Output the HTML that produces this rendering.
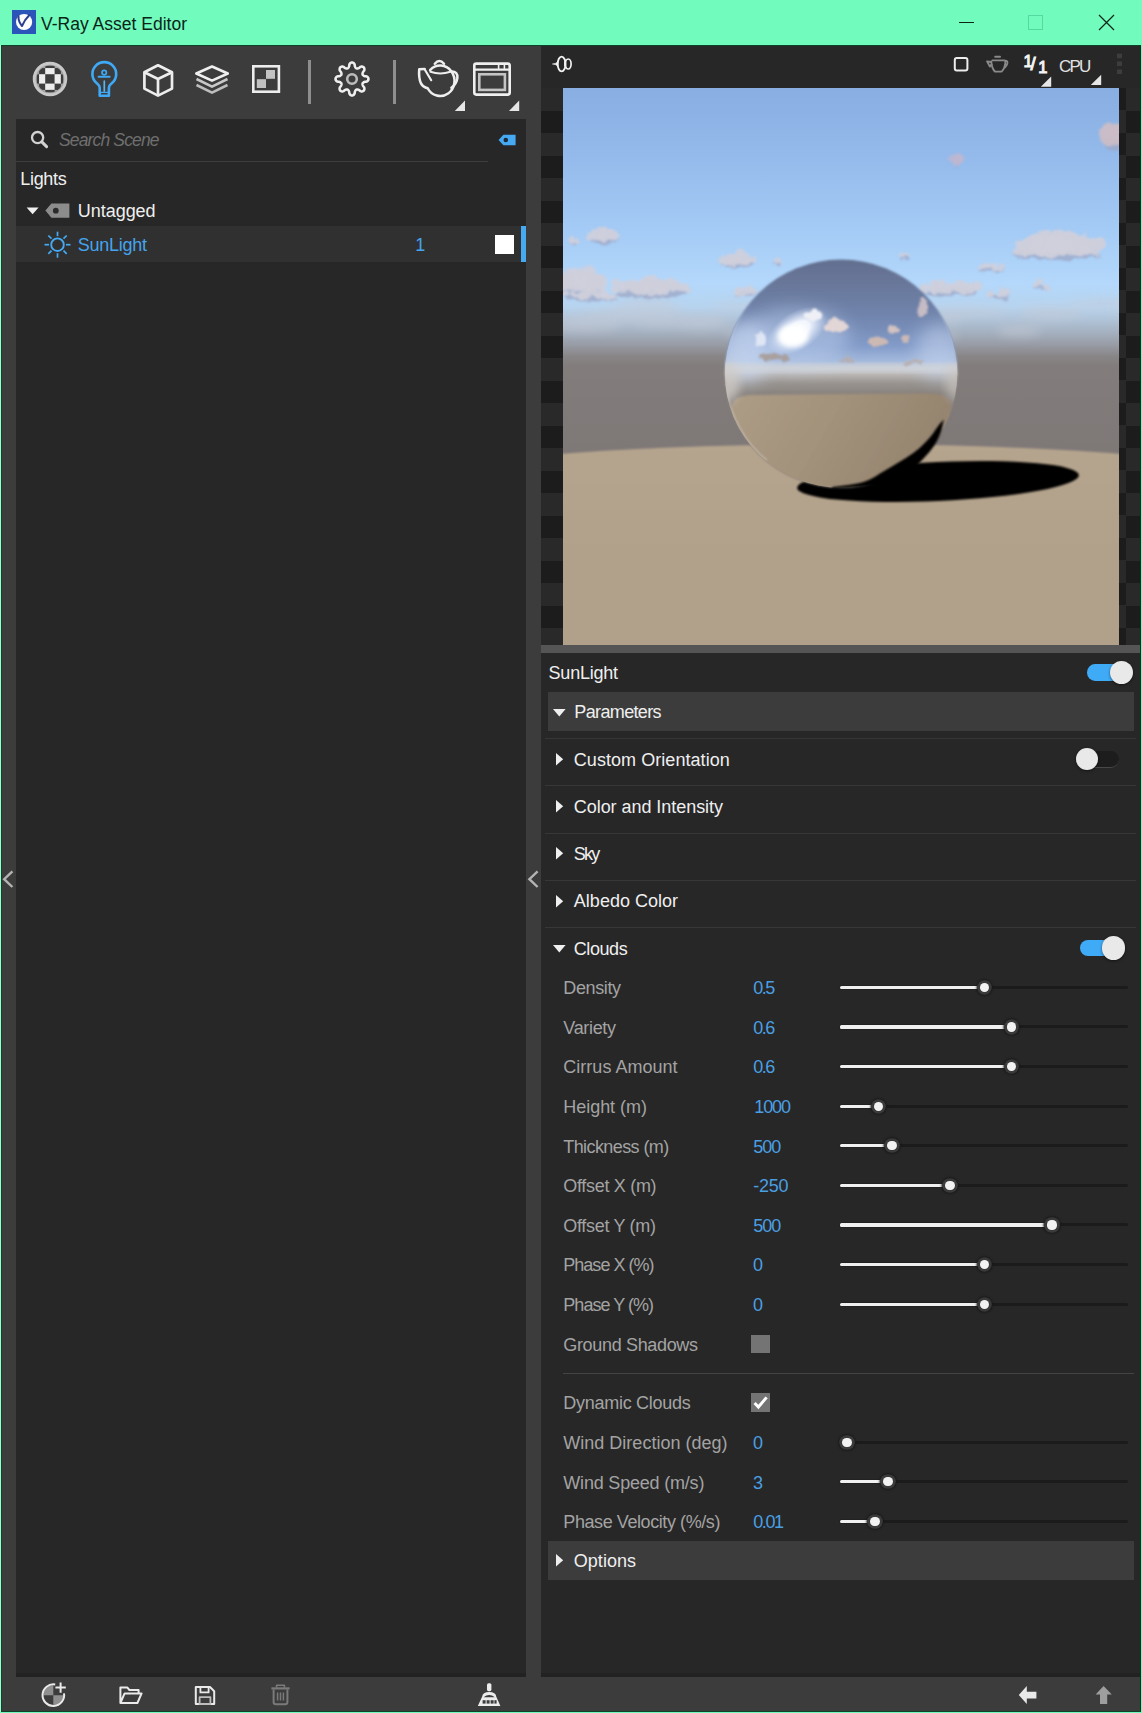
<!DOCTYPE html>
<html><head><meta charset="utf-8"><title>V-Ray Asset Editor</title>
<style>
*{box-sizing:border-box;margin:0;padding:0}
html,body{width:1142px;height:1713px;overflow:hidden;background:#3c3c3c}
body{font-family:"Liberation Sans",sans-serif;font-size:18px;color:#f0f0f0;position:relative}
.abs{position:absolute}
.t{position:absolute;white-space:nowrap}
svg{position:absolute;overflow:visible}
#title{left:0;top:0;width:1142px;height:45px;background:#71fcbd}
#left{left:16px;top:119px;width:510px;height:1558px;background:#272727;border-bottom:4px solid #222}
#right{left:541px;top:46px;width:599px;height:1631px;background:#272727;border-bottom:4px solid #222}
#checker{left:541px;top:88px;width:599px;height:557px;background:repeating-conic-gradient(#1c1c1c 0% 25%,#292929 0% 50%);background-size:45px 45px}
.sep{position:absolute;height:1px;background:#373737;left:544.5px;width:591.5px}
.track{position:absolute;left:840px;width:288px;height:3px;background:#1b1b1b;border-radius:1.5px}
.fill{position:absolute;left:840px;height:3.4px;background:#f0f0f0;border-radius:1.5px;box-shadow:0 0 0 0.6px #1c1c1c}
.knob{position:absolute;width:9.2px;height:9.2px;border-radius:50%;background:#f2f2f2;box-shadow:0 0 0 2.8px #3a3a3a,0 0 2px 3.6px #171717}
.hdr{position:absolute;left:548px;width:586px;height:39px;background:#3c3c3c}
</style></head>
<body>
<div id="title" class="abs"></div>
<svg style="left:12px;top:10px" width="24" height="24" viewBox="0 0 24 24"><rect width="24" height="24" fill="#2b55b8"/><circle cx="12.1" cy="12" r="8.1" fill="#fdfdfd"/><path d="M6.5 6.4 Q6.2 11.4 10 16 Q12.6 9.6 17.4 5" fill="none" stroke="#2b3f92" stroke-width="2" stroke-linecap="round" stroke-linejoin="round"/></svg>
<div class="t" style="left:41.00px;top:10px;font-size:17.5px;line-height:28px;color:#0b2418;letter-spacing:0.006px;">V-Ray Asset Editor</div>
<svg style="left:940px;top:0" width="202" height="45" viewBox="940 0 202 45" shape-rendering="crispEdges"><rect x="959" y="22" width="15" height="1" fill="#0b2418"/><rect x="1028.5" y="15.5" width="14" height="14" fill="none" stroke="#55d9a0" stroke-width="1"/><g shape-rendering="geometricPrecision"><path d="M1099 15 L1114 30 M1114 15 L1099 30" stroke="#0b2418" stroke-width="1.2" fill="none"/></g></svg>
<div id="left" class="abs"></div>
<div id="right" class="abs"></div>
<div id="checker" class="abs"></div>
<svg style="left:30px;top:59px" width="40" height="40" viewBox="30 59 40 40"><defs><clipPath id="cs"><circle cx="50" cy="79" r="13.4"/></clipPath></defs><circle cx="50" cy="79" r="15.8" fill="#a4a4a4" stroke="#c9c9c9" stroke-width="2.9"/><g clip-path="url(#cs)"><rect x="36.40" y="74.30" width="2.70" height="9.40" fill="#3d3d3d"/><rect x="39.10" y="68.10" width="6.20" height="6.20" fill="#3d3d3d"/><rect x="39.10" y="74.30" width="6.20" height="9.40" fill="#ececec"/><rect x="39.10" y="83.70" width="6.20" height="6.20" fill="#3d3d3d"/><rect x="45.30" y="65.40" width="9.40" height="2.70" fill="#3d3d3d"/><rect x="45.30" y="68.10" width="9.40" height="6.20" fill="#ececec"/><rect x="45.30" y="74.30" width="9.40" height="9.40" fill="#3d3d3d"/><rect x="45.30" y="83.70" width="9.40" height="6.20" fill="#ececec"/><rect x="45.30" y="89.90" width="9.40" height="2.70" fill="#3d3d3d"/><rect x="54.70" y="68.10" width="6.20" height="6.20" fill="#3d3d3d"/><rect x="54.70" y="74.30" width="6.20" height="9.40" fill="#ececec"/><rect x="54.70" y="83.70" width="6.20" height="6.20" fill="#3d3d3d"/><rect x="60.90" y="74.30" width="2.70" height="9.40" fill="#3d3d3d"/></g></svg>
<svg style="left:88px;top:58px" width="34" height="42" viewBox="88 58 34 42" fill="none" stroke="#3fa9f5" stroke-width="2.6" stroke-linecap="round" stroke-linejoin="round"><path d="M99.7 95.8 L99.7 87.8 Q99.7 85.4 97.4 83.7 L96.6 83.1 A11.9 11.9 0 1 1 112 83.1 L111.2 83.7 Q108.9 85.4 108.9 87.8 L108.9 95.8 Z"/><path d="M100.4 92.4 L108.2 92.4" stroke-width="1.4"/><path d="M104.3 81 L104.3 91" stroke-width="1.7" stroke="#5ab4f2"/><circle cx="104.2" cy="72.6" r="2.2" stroke-width="1.7"/><path d="M98.6 76.7 L109.6 76.7" stroke-width="2"/></svg>
<svg style="left:140px;top:60px" width="36" height="40" viewBox="140 60 36 40" fill="none" stroke="#ededed" stroke-width="2.7" stroke-linejoin="round"><path d="M158 65.3 L172 72.3 L172 88.6 L158 95.6 L144.4 88.6 L144.4 72.3 Z"/><path d="M144.4 72.3 L158 79 L172 72.3 M158 79 L158 95.6"/></svg>
<svg style="left:192px;top:60px" width="40" height="40" viewBox="192 60 40 40" fill="none" stroke-width="2.6" stroke-linejoin="round"><path d="M196.5 85 L212 92.6 L227.5 85" stroke="#bdbdbd"/><path d="M196.5 79 L212 86.6 L227.5 79" stroke="#c8c8c8"/><path d="M212 66.5 L227.8 73.5 L212 80.6 L196.3 73.5 Z" stroke="#efefef"/></svg>
<svg style="left:250px;top:62px" width="32" height="34" viewBox="250 62 32 34"><rect x="253.3" y="66.3" width="25.6" height="25.4" fill="none" stroke="#ededed" stroke-width="2.6"/><rect x="266" y="70" width="9" height="8.8" fill="#c2c2c2"/><rect x="256.8" y="79.2" width="9.2" height="8.8" fill="#c2c2c2"/></svg>
<div class="abs" style="left:308px;top:60px;width:3px;height:44px;background:#8e8e8e"></div>
<div class="abs" style="left:393px;top:60px;width:3px;height:44px;background:#8e8e8e"></div>
<svg style="left:332px;top:59px" width="40" height="40" viewBox="332 59 40 40" fill="none"><path d="M352.00 62.50 L352.43 62.54 L352.86 62.65 L353.27 62.85 L353.67 63.12 L354.04 63.48 L354.38 63.95 L354.67 64.60 L354.78 65.94 L354.98 66.59 L355.20 67.07 L355.42 67.46 L355.65 67.78 L355.88 68.04 L356.13 68.23 L356.40 68.38 L356.69 68.46 L357.01 68.50 L357.36 68.49 L357.74 68.42 L358.18 68.30 L358.67 68.12 L359.27 67.80 L360.29 66.93 L360.96 66.67 L361.53 66.58 L362.05 66.59 L362.52 66.68 L362.95 66.84 L363.34 67.06 L363.67 67.33 L363.94 67.66 L364.16 68.05 L364.32 68.48 L364.41 68.95 L364.42 69.47 L364.33 70.04 L364.07 70.71 L363.20 71.73 L362.88 72.33 L362.70 72.82 L362.58 73.26 L362.51 73.64 L362.50 73.99 L362.54 74.31 L362.62 74.60 L362.77 74.87 L362.96 75.12 L363.22 75.35 L363.54 75.58 L363.93 75.80 L364.41 76.02 L365.06 76.22 L366.40 76.33 L367.05 76.62 L367.52 76.96 L367.88 77.33 L368.15 77.73 L368.35 78.14 L368.46 78.57 L368.50 79.00 L368.46 79.43 L368.35 79.86 L368.15 80.27 L367.88 80.67 L367.52 81.04 L367.05 81.38 L366.40 81.67 L365.06 81.78 L364.41 81.98 L363.93 82.20 L363.54 82.42 L363.22 82.65 L362.96 82.88 L362.77 83.13 L362.62 83.40 L362.54 83.69 L362.50 84.01 L362.51 84.36 L362.58 84.74 L362.70 85.18 L362.88 85.67 L363.20 86.27 L364.07 87.29 L364.33 87.96 L364.42 88.53 L364.41 89.05 L364.32 89.52 L364.16 89.95 L363.94 90.34 L363.67 90.67 L363.34 90.94 L362.95 91.16 L362.52 91.32 L362.05 91.41 L361.53 91.42 L360.96 91.33 L360.29 91.07 L359.27 90.20 L358.67 89.88 L358.18 89.70 L357.74 89.58 L357.36 89.51 L357.01 89.50 L356.69 89.54 L356.40 89.62 L356.13 89.77 L355.88 89.96 L355.65 90.22 L355.42 90.54 L355.20 90.93 L354.98 91.41 L354.78 92.06 L354.67 93.40 L354.38 94.05 L354.04 94.52 L353.67 94.88 L353.27 95.15 L352.86 95.35 L352.43 95.46 L352.00 95.50 L351.57 95.46 L351.14 95.35 L350.73 95.15 L350.33 94.88 L349.96 94.52 L349.62 94.05 L349.33 93.40 L349.22 92.06 L349.02 91.41 L348.80 90.93 L348.58 90.54 L348.35 90.22 L348.12 89.96 L347.87 89.77 L347.60 89.62 L347.31 89.54 L346.99 89.50 L346.64 89.51 L346.26 89.58 L345.82 89.70 L345.33 89.88 L344.73 90.20 L343.71 91.07 L343.04 91.33 L342.47 91.42 L341.95 91.41 L341.48 91.32 L341.05 91.16 L340.66 90.94 L340.33 90.67 L340.06 90.34 L339.84 89.95 L339.68 89.52 L339.59 89.05 L339.58 88.53 L339.67 87.96 L339.93 87.29 L340.80 86.27 L341.12 85.67 L341.30 85.18 L341.42 84.74 L341.49 84.36 L341.50 84.01 L341.46 83.69 L341.38 83.40 L341.23 83.13 L341.04 82.88 L340.78 82.65 L340.46 82.42 L340.07 82.20 L339.59 81.98 L338.94 81.78 L337.60 81.67 L336.95 81.38 L336.48 81.04 L336.12 80.67 L335.85 80.27 L335.65 79.86 L335.54 79.43 L335.50 79.00 L335.54 78.57 L335.65 78.14 L335.85 77.73 L336.12 77.33 L336.48 76.96 L336.95 76.62 L337.60 76.33 L338.94 76.22 L339.59 76.02 L340.07 75.80 L340.46 75.58 L340.78 75.35 L341.04 75.12 L341.23 74.87 L341.38 74.60 L341.46 74.31 L341.50 73.99 L341.49 73.64 L341.42 73.26 L341.30 72.82 L341.12 72.33 L340.80 71.73 L339.93 70.71 L339.67 70.04 L339.58 69.47 L339.59 68.95 L339.68 68.48 L339.84 68.05 L340.06 67.66 L340.33 67.33 L340.66 67.06 L341.05 66.84 L341.48 66.68 L341.95 66.59 L342.47 66.58 L343.04 66.67 L343.71 66.93 L344.73 67.80 L345.33 68.12 L345.82 68.30 L346.26 68.42 L346.64 68.49 L346.99 68.50 L347.31 68.46 L347.60 68.38 L347.87 68.23 L348.12 68.04 L348.35 67.78 L348.58 67.46 L348.80 67.07 L349.02 66.59 L349.22 65.94 L349.33 64.60 L349.62 63.95 L349.96 63.48 L350.33 63.12 L350.73 62.85 L351.14 62.65 L351.57 62.54 Z" stroke="#efefef" stroke-width="2.5" stroke-linejoin="round"/><circle cx="352" cy="79" r="4.8" stroke="#bcbcbc" stroke-width="2.6"/></svg>
<svg style="left:416px;top:58px" width="46" height="42" viewBox="416 58 46 42" fill="none" stroke="#efefef" stroke-width="2.5" stroke-linecap="round" stroke-linejoin="round"><path d="M427.57 87.94 A14.3 15.2 0 1 0 430.09 70.05"/><path d="M430.4 71.8 Q440.2 75 450.4 71.8" stroke-width="2"/><path d="M434.8 63.8 Q439.4 58.4 444 63.8"/><path d="M424.6 68.9 L419.2 69.3 Q418.6 78 420.8 83 Q422.4 86.6 426.6 88"/><path d="M424.6 69.3 L431.2 80.2" stroke-width="2.2"/><path d="M451.8 71.6 Q457.8 71.6 457.4 77.8 Q456.8 83.6 451.4 87.8"/></svg>
<svg style="left:470px;top:60px" width="44" height="40" viewBox="470 60 44 40" fill="none"><rect x="474.3" y="63.6" width="35.4" height="31" rx="2" stroke="#efefef" stroke-width="2.6"/><path d="M474.3 69.6 L509.7 69.6" stroke="#efefef" stroke-width="2.2"/><path d="M498.6 65 L498.6 69 M504.4 65 L504.4 69" stroke="#efefef" stroke-width="1.6"/><rect x="479.3" y="74.3" width="25.6" height="15.6" stroke="#c4c4c4" stroke-width="2.6"/></svg>
<svg style="left:0;top:0" width="1142" height="120" viewBox="0 0 1142 120"><path d="M465 100.6 L465 111 L454.8 111 Z M519.2 100.6 L519.2 111 L509 111 Z" fill="#e6e6e6"/><path d="M1051.2 76.6 L1051.2 86.8 L1040.8 86.8 Z M1101.2 74.8 L1101.2 85 L1090.8 85 Z" fill="#e6e6e6"/></svg>
<svg style="left:28px;top:128px" width="24" height="24" viewBox="28 128 24 24" fill="none" stroke="#d2d2d2" stroke-linecap="round"><circle cx="37.6" cy="137.6" r="5.6" stroke-width="2.3"/><path d="M41.8 141.9 L46.6 146.6" stroke-width="3"/></svg>
<div class="t" style="left:59.00px;top:126px;font-size:17.5px;line-height:28px;color:#6f6f6f;letter-spacing:-0.848px;font-style:italic;">Search Scene</div>
<div class="abs" style="left:16px;top:161px;width:472px;height:1px;background:#3e3e3e"></div>
<svg style="left:496px;top:132px" width="22" height="16" viewBox="496 132 22 16"><path d="M498.6 140 L503.4 134.8 L515.6 134.8 L515.6 145.2 L503.4 145.2 Z" fill="#45aaf2"/><circle cx="505.8" cy="140" r="2.3" fill="#1d2a36"/></svg>
<div class="t" style="left:20.20px;top:165px;font-size:18px;line-height:28px;color:#efefef;letter-spacing:-0.286px;">Lights</div>
<svg style="left:24px;top:200px" width="50" height="22" viewBox="24 200 50 22"><path d="M26.6 207.4 L38.6 207.4 L32.6 214.2 Z" fill="#efefef"/><path d="M45.4 210.6 L51.4 203.6 L69.4 203.6 L69.4 217.8 L51.4 217.8 Z" fill="#8c8c8c"/><circle cx="55.8" cy="210.7" r="2.9" fill="#2b2b2b"/></svg>
<div class="t" style="left:77.80px;top:197px;font-size:18px;line-height:28px;color:#efefef;letter-spacing:-0.037px;">Untagged</div>
<div class="abs" style="left:16px;top:226px;width:505px;height:36px;background:#303030"></div>
<div class="abs" style="left:521px;top:226px;width:5px;height:36px;background:#45aaf2"></div>
<div class="abs" style="left:495px;top:235px;width:19px;height:18.5px;background:#fff"></div>
<svg style="left:43px;top:230px" width="30" height="30" viewBox="43 230 30 30" fill="none" stroke="#45aaf2" stroke-linecap="butt"><circle cx="57.5" cy="244.7" r="6.3" stroke-width="1.9"/><path d="M66.00 244.70 L70.50 244.70" stroke-width="1.7"/><path d="M63.51 250.71 L66.69 253.89" stroke-width="1.7"/><path d="M57.50 253.20 L57.50 257.70" stroke-width="1.7"/><path d="M51.49 250.71 L48.31 253.89" stroke-width="1.7"/><path d="M49.00 244.70 L44.50 244.70" stroke-width="1.7"/><path d="M51.49 238.69 L48.31 235.51" stroke-width="1.7"/><path d="M57.50 236.20 L57.50 231.70" stroke-width="1.7"/><path d="M63.51 238.69 L66.69 235.51" stroke-width="1.7"/></svg>
<div class="t" style="left:77.80px;top:231px;font-size:18px;line-height:28px;color:#45a4ec;letter-spacing:-0.266px;">SunLight</div>
<div class="t" style="left:415.20px;top:231px;font-size:18px;line-height:28px;color:#45a4ec;">1</div>
<svg style="left:0;top:865px" width="545" height="30" viewBox="0 865 545 30" fill="none" stroke="#b4b4b4" stroke-width="2.4"><path d="M12.4 871.4 L4.2 879.2 L12.4 887"/><path d="M537.6 871.4 L529.4 879.2 L537.6 887"/></svg>
<svg style="left:548px;top:52px" width="30" height="24" viewBox="548 52 30 24" fill="none" stroke="#f2f2f2"><ellipse cx="561.6" cy="64" rx="3.9" ry="7.4" stroke-width="1.8"/><ellipse cx="568.2" cy="64" rx="2.9" ry="5" stroke-width="1.7"/><path d="M566 59.5 Q563.2 64 566 68.5" stroke-width="1.2"/><path d="M552.4 64 Q556.5 64 558 61 L558 67 Q556.5 64 552.4 64Z" fill="#f2f2f2" stroke-width="0.6"/></svg>
<svg style="left:950px;top:52px" width="22" height="24" viewBox="950 52 22 24" fill="none"><rect x="954.8" y="58" width="12.6" height="12.4" rx="2" stroke="#ececec" stroke-width="2"/></svg>
<svg style="left:984px;top:52px" width="26" height="24" viewBox="984 52 26 24" fill="none" stroke="#8a8a8a" stroke-width="1.8" stroke-linecap="round" stroke-linejoin="round"><path d="M995.2 56.8 L1000 56.8" stroke-width="2"/><path d="M992.4 60.3 L1004.2 60.3"/><path d="M991.3 61.4 Q991.6 68.6 995.2 71.7 L1001.6 71.7 Q1005 68.6 1005.5 61.4"/><path d="M991.6 64.4 L989.9 66.6 L987 61.3 L991 62"/><path d="M1004.8 60.7 Q1008.2 60.5 1007.3 63.8 Q1006.6 66.2 1004.9 67.4"/></svg>
<div class="t" style="left:1023.60px;top:48px;font-size:16.5px;line-height:26px;color:#f4f4f4;-webkit-text-stroke:1px #f4f4f4;">1</div>
<div class="t" style="left:1030.60px;top:49px;font-size:18.5px;line-height:29px;color:#f4f4f4;-webkit-text-stroke:1px #f4f4f4;">/</div>
<div class="t" style="left:1038.30px;top:54px;font-size:16.5px;line-height:26px;color:#f4f4f4;-webkit-text-stroke:1px #f4f4f4;">1</div>
<div class="t" style="left:1059.00px;top:53px;font-size:17px;line-height:27px;color:#e2e2e2;letter-spacing:-1.795px;">CPU</div>
<svg style="left:1114px;top:50px" width="12" height="30" viewBox="1114 50 12 30"><rect x="1117" y="53.6" width="5" height="4.6" fill="#3d3d3d"/><rect x="1117" y="61.4" width="5" height="4.6" fill="#3d3d3d"/><rect x="1117" y="69.4" width="5" height="4.6" fill="#3d3d3d"/></svg>
<svg style="left:563px;top:88px" width="556" height="557" viewBox="563 88 556 557">
<defs>
<linearGradient id="sky" x1="0" y1="88" x2="0" y2="645" gradientUnits="userSpaceOnUse">
<stop offset="0" stop-color="#88aee2"/>
<stop offset="0.13" stop-color="#95bbec"/>
<stop offset="0.262" stop-color="#a5ccf6"/>
<stop offset="0.35" stop-color="#b4d8fb"/>
<stop offset="0.393" stop-color="#b7d4ef"/>
<stop offset="0.415" stop-color="#b0c4d9"/>
<stop offset="0.436" stop-color="#a6b3c3"/>
<stop offset="0.459" stop-color="#999ea8"/>
<stop offset="0.481" stop-color="#898688"/>
<stop offset="0.499" stop-color="#827d7c"/>
<stop offset="0.65" stop-color="#7e7877"/>
</linearGradient>
<linearGradient id="gnd" x1="0" y1="445" x2="0" y2="645" gradientUnits="userSpaceOnUse">
<stop offset="0" stop-color="#b6a58e"/><stop offset="0.6" stop-color="#b1a18a"/><stop offset="1" stop-color="#b1a18a"/>
</linearGradient>
<linearGradient id="sph" x1="0" y1="258" x2="0" y2="489" gradientUnits="userSpaceOnUse">
<stop offset="0" stop-color="#626e8e"/>
<stop offset="0.1" stop-color="#687698"/>
<stop offset="0.25" stop-color="#7185ad"/>
<stop offset="0.38" stop-color="#829bc8"/>
<stop offset="0.445" stop-color="#a3b9dd"/>
<stop offset="0.478" stop-color="#c2c8d2"/>
<stop offset="0.5" stop-color="#bdbab9"/>
<stop offset="0.54" stop-color="#9a9591"/>
<stop offset="0.585" stop-color="#8a847f"/>
<stop offset="1" stop-color="#8a847f"/>
</linearGradient>
<linearGradient id="sgnd" x1="733" y1="392" x2="900" y2="489" gradientUnits="userSpaceOnUse">
<stop offset="0" stop-color="#ad9c86"/><stop offset="0.5" stop-color="#a3927b"/><stop offset="1" stop-color="#96856f"/>
</linearGradient>
<radialGradient id="edge" cx="841.1" cy="373.7" r="115.2" gradientUnits="userSpaceOnUse">
<stop offset="0" stop-color="#000" stop-opacity="0"/><stop offset="0.8" stop-color="#000" stop-opacity="0"/><stop offset="1" stop-color="#1a2038" stop-opacity=".22"/>
</radialGradient>
<radialGradient id="glint" cx="0.5" cy="0.5" r="0.5"><stop offset="0" stop-color="#fff"/><stop offset="0.4" stop-color="#f6f9ff" stop-opacity=".96"/><stop offset="1" stop-color="#dfeaff" stop-opacity="0"/></radialGradient>
<filter id="b1" x="-20%" y="-20%" width="140%" height="140%"><feGaussianBlur stdDeviation="1.3"/></filter>
<filter id="b2" x="-20%" y="-20%" width="140%" height="140%"><feGaussianBlur stdDeviation="2.6"/></filter>
<filter id="b5" x="-20%" y="-40%" width="140%" height="180%"><feGaussianBlur stdDeviation="5"/></filter>
<filter id="b9" x="-30%" y="-40%" width="160%" height="180%"><feGaussianBlur stdDeviation="9"/></filter>
<filter id="b08" x="-10%" y="-10%" width="120%" height="120%"><feGaussianBlur stdDeviation="0.8"/></filter>
<filter id="cl" x="-10%" y="-10%" width="120%" height="120%"><feTurbulence type="fractalNoise" baseFrequency="0.09" numOctaves="3" seed="4" result="n"/><feDisplacementMap in="SourceGraphic" in2="n" scale="9" xChannelSelector="R" yChannelSelector="G"/><feGaussianBlur stdDeviation="1.1"/></filter>
<clipPath id="imgc"><rect x="563" y="88" width="556" height="557"/></clipPath>
<clipPath id="sc"><ellipse cx="841.1" cy="373.7" rx="116.2" ry="114.0"/></clipPath>
</defs>
<g clip-path="url(#imgc)">
<rect x="563" y="88" width="556" height="557" fill="url(#sky)"/>
<g filter="url(#b5)" opacity=".5">
<ellipse cx="743" cy="307" rx="31" ry="4" fill="#c6cad6"/>
<ellipse cx="861" cy="314" rx="16" ry="7" fill="#c6cad6"/>
<ellipse cx="584" cy="317" rx="17" ry="4" fill="#c6cad6"/>
<ellipse cx="799" cy="330" rx="18" ry="5" fill="#c6cad6"/>
<ellipse cx="912" cy="334" rx="29" ry="6" fill="#c6cad6"/>
<ellipse cx="1106" cy="304" rx="36" ry="5" fill="#c6cad6"/>
<ellipse cx="643" cy="306" rx="23" ry="8" fill="#c6cad6"/>
<ellipse cx="663" cy="322" rx="31" ry="6" fill="#c6cad6"/>
<ellipse cx="868" cy="304" rx="16" ry="5" fill="#c6cad6"/>
<ellipse cx="941" cy="317" rx="23" ry="7" fill="#c6cad6"/>
<ellipse cx="815" cy="312" rx="35" ry="7" fill="#c6cad6"/>
<ellipse cx="699" cy="322" rx="28" ry="8" fill="#c6cad6"/>
<ellipse cx="969" cy="312" rx="40" ry="5" fill="#c6cad6"/>
<ellipse cx="795" cy="328" rx="19" ry="6" fill="#c6cad6"/>
<ellipse cx="585" cy="325" rx="34" ry="7" fill="#c6cad6"/>
<ellipse cx="1050" cy="313" rx="32" ry="7" fill="#c6cad6"/>
<ellipse cx="885" cy="318" rx="36" ry="9" fill="#c6cad6"/>
<ellipse cx="827" cy="325" rx="17" ry="8" fill="#c6cad6"/>
<ellipse cx="923" cy="336" rx="36" ry="5" fill="#c6cad6"/>
<ellipse cx="778" cy="325" rx="16" ry="6" fill="#c6cad6"/>
<ellipse cx="656" cy="306" rx="16" ry="8" fill="#c6cad6"/>
<ellipse cx="635" cy="310" rx="25" ry="8" fill="#c6cad6"/>
<ellipse cx="608" cy="317" rx="29" ry="8" fill="#c6cad6"/>
<ellipse cx="1019" cy="331" rx="22" ry="6" fill="#c6cad6"/>
<ellipse cx="762" cy="332" rx="39" ry="5" fill="#c6cad6"/>
<ellipse cx="661" cy="310" rx="21" ry="6" fill="#c6cad6"/>
</g>
<g filter="url(#cl)">
<ellipse cx="604.0" cy="240.1" rx="13.4" ry="3.9" fill="#9da6c4" opacity="0.77"/><circle cx="592.5" cy="234.9" r="4.8" fill="#cfcfdc" opacity="0.9"/><circle cx="600.9" cy="233.4" r="6.6" fill="#cfcfdc" opacity="0.9"/><circle cx="605.6" cy="233.8" r="7.1" fill="#cfcfdc" opacity="0.9"/><circle cx="613.4" cy="234.9" r="5.6" fill="#cfcfdc" opacity="0.9"/>
<ellipse cx="574.0" cy="242.3" rx="3.8" ry="2.4" fill="#9da6c4" opacity="0.77"/><circle cx="570.3" cy="239.1" r="2.7" fill="#cfcfdc" opacity="0.9"/><circle cx="572.6" cy="238.9" r="3.4" fill="#cfcfdc" opacity="0.9"/><circle cx="578.3" cy="240.0" r="3.5" fill="#cfcfdc" opacity="0.9"/>
<ellipse cx="738.0" cy="264.1" rx="17.3" ry="3.9" fill="#9da6c4" opacity="0.77"/><circle cx="723.5" cy="260.2" r="4.7" fill="#cfcfdc" opacity="0.9"/><circle cx="730.8" cy="260.1" r="6.2" fill="#cfcfdc" opacity="0.9"/><circle cx="733.1" cy="260.1" r="6.4" fill="#cfcfdc" opacity="0.9"/><circle cx="741.6" cy="257.3" r="7.4" fill="#cfcfdc" opacity="0.9"/><circle cx="746.9" cy="259.3" r="5.2" fill="#cfcfdc" opacity="0.9"/><circle cx="753.3" cy="258.8" r="3.6" fill="#cfcfdc" opacity="0.9"/>
<ellipse cx="777.0" cy="264.0" rx="3.4" ry="1.8" fill="#9da6c4" opacity="0.77"/><circle cx="775.8" cy="261.6" r="2.6" fill="#cfcfdc" opacity="0.9"/><circle cx="776.0" cy="262.1" r="2.5" fill="#cfcfdc" opacity="0.9"/><circle cx="779.2" cy="261.3" r="2.6" fill="#cfcfdc" opacity="0.9"/>
<ellipse cx="581.0" cy="289.8" rx="20.2" ry="7.2" fill="#9da6c4" opacity="0.77"/><circle cx="562.3" cy="282.0" r="6.8" fill="#cfcfdc" opacity="0.9"/><circle cx="567.3" cy="280.1" r="10.2" fill="#cfcfdc" opacity="0.9"/><circle cx="573.2" cy="278.7" r="11.6" fill="#cfcfdc" opacity="0.9"/><circle cx="580.7" cy="279.3" r="10.3" fill="#cfcfdc" opacity="0.9"/><circle cx="586.7" cy="278.6" r="13.0" fill="#cfcfdc" opacity="0.9"/><circle cx="591.9" cy="281.8" r="10.5" fill="#cfcfdc" opacity="0.9"/><circle cx="599.3" cy="282.8" r="7.5" fill="#cfcfdc" opacity="0.9"/>
<ellipse cx="592.0" cy="298.6" rx="25.9" ry="3.0" fill="#9da6c4" opacity="0.77"/><circle cx="566.9" cy="293.8" r="3.7" fill="#cfcfdc" opacity="0.9"/><circle cx="574.8" cy="294.2" r="3.3" fill="#cfcfdc" opacity="0.9"/><circle cx="582.0" cy="295.2" r="4.1" fill="#cfcfdc" opacity="0.9"/><circle cx="585.8" cy="294.5" r="4.8" fill="#cfcfdc" opacity="0.9"/><circle cx="590.8" cy="293.1" r="5.7" fill="#cfcfdc" opacity="0.9"/><circle cx="596.9" cy="294.1" r="4.1" fill="#cfcfdc" opacity="0.9"/><circle cx="603.6" cy="294.1" r="5.2" fill="#cfcfdc" opacity="0.9"/><circle cx="608.5" cy="296.4" r="3.6" fill="#cfcfdc" opacity="0.9"/><circle cx="614.3" cy="294.7" r="3.3" fill="#cfcfdc" opacity="0.9"/>
<ellipse cx="650.0" cy="292.7" rx="35.5" ry="5.1" fill="#9da6c4" opacity="0.77"/><circle cx="615.9" cy="285.7" r="4.9" fill="#cfcfdc" opacity="0.9"/><circle cx="623.7" cy="286.8" r="5.1" fill="#cfcfdc" opacity="0.9"/><circle cx="630.0" cy="286.7" r="6.0" fill="#cfcfdc" opacity="0.9"/><circle cx="635.0" cy="286.0" r="6.5" fill="#cfcfdc" opacity="0.9"/><circle cx="641.6" cy="286.5" r="8.2" fill="#cfcfdc" opacity="0.9"/><circle cx="645.5" cy="284.8" r="7.8" fill="#cfcfdc" opacity="0.9"/><circle cx="653.1" cy="285.6" r="9.9" fill="#cfcfdc" opacity="0.9"/><circle cx="660.3" cy="286.6" r="8.0" fill="#cfcfdc" opacity="0.9"/><circle cx="663.8" cy="286.7" r="7.2" fill="#cfcfdc" opacity="0.9"/><circle cx="672.5" cy="285.0" r="6.9" fill="#cfcfdc" opacity="0.9"/><circle cx="676.8" cy="286.0" r="5.5" fill="#cfcfdc" opacity="0.9"/><circle cx="685.2" cy="288.1" r="4.6" fill="#cfcfdc" opacity="0.9"/>
<ellipse cx="746.0" cy="294.4" rx="11.5" ry="2.7" fill="#9da6c4" opacity="0.77"/><circle cx="737.3" cy="291.4" r="3.2" fill="#cfcfdc" opacity="0.9"/><circle cx="741.8" cy="291.6" r="4.9" fill="#cfcfdc" opacity="0.9"/><circle cx="749.6" cy="291.0" r="3.9" fill="#cfcfdc" opacity="0.9"/><circle cx="754.3" cy="292.6" r="3.0" fill="#cfcfdc" opacity="0.9"/>
<ellipse cx="1060.0" cy="253.8" rx="40.3" ry="7.2" fill="#9da6c4" opacity="0.77"/><circle cx="1020.8" cy="246.7" r="7.3" fill="#cfcfdc" opacity="0.9"/><circle cx="1026.9" cy="245.3" r="8.4" fill="#cfcfdc" opacity="0.9"/><circle cx="1031.7" cy="245.1" r="9.6" fill="#cfcfdc" opacity="0.9"/><circle cx="1040.2" cy="244.3" r="9.0" fill="#cfcfdc" opacity="0.9"/><circle cx="1043.4" cy="244.4" r="12.6" fill="#cfcfdc" opacity="0.9"/><circle cx="1049.2" cy="244.8" r="13.9" fill="#cfcfdc" opacity="0.9"/><circle cx="1057.6" cy="242.8" r="12.6" fill="#cfcfdc" opacity="0.9"/><circle cx="1061.1" cy="242.6" r="12.3" fill="#cfcfdc" opacity="0.9"/><circle cx="1067.8" cy="243.0" r="10.8" fill="#cfcfdc" opacity="0.9"/><circle cx="1074.9" cy="245.3" r="11.1" fill="#cfcfdc" opacity="0.9"/><circle cx="1081.1" cy="244.3" r="11.1" fill="#cfcfdc" opacity="0.9"/><circle cx="1087.6" cy="244.1" r="9.4" fill="#cfcfdc" opacity="0.9"/><circle cx="1095.0" cy="245.6" r="9.9" fill="#cfcfdc" opacity="0.9"/><circle cx="1099.8" cy="244.8" r="6.7" fill="#cfcfdc" opacity="0.9"/>
<ellipse cx="992.0" cy="269.3" rx="12.5" ry="2.4" fill="#9da6c4" opacity="0.77"/><circle cx="982.1" cy="266.8" r="3.1" fill="#cfcfdc" opacity="0.9"/><circle cx="987.3" cy="265.9" r="3.2" fill="#cfcfdc" opacity="0.9"/><circle cx="994.3" cy="266.5" r="4.3" fill="#cfcfdc" opacity="0.9"/><circle cx="1002.2" cy="266.8" r="3.0" fill="#cfcfdc" opacity="0.9"/>
<ellipse cx="950.0" cy="292.1" rx="27.8" ry="3.9" fill="#9da6c4" opacity="0.77"/><circle cx="923.3" cy="287.9" r="4.3" fill="#cfcfdc" opacity="0.9"/><circle cx="932.1" cy="286.5" r="4.5" fill="#cfcfdc" opacity="0.9"/><circle cx="935.7" cy="287.8" r="5.3" fill="#cfcfdc" opacity="0.9"/><circle cx="942.1" cy="285.9" r="6.5" fill="#cfcfdc" opacity="0.9"/><circle cx="949.2" cy="287.8" r="6.4" fill="#cfcfdc" opacity="0.9"/><circle cx="956.9" cy="286.4" r="5.3" fill="#cfcfdc" opacity="0.9"/><circle cx="961.5" cy="287.6" r="6.7" fill="#cfcfdc" opacity="0.9"/><circle cx="970.6" cy="287.7" r="5.7" fill="#cfcfdc" opacity="0.9"/><circle cx="977.6" cy="286.6" r="4.5" fill="#cfcfdc" opacity="0.9"/>
<ellipse cx="999.0" cy="296.3" rx="10.6" ry="2.4" fill="#9da6c4" opacity="0.77"/><circle cx="990.1" cy="293.7" r="3.3" fill="#cfcfdc" opacity="0.9"/><circle cx="1000.8" cy="292.4" r="3.7" fill="#cfcfdc" opacity="0.9"/><circle cx="1007.3" cy="292.6" r="3.3" fill="#cfcfdc" opacity="0.9"/>
<ellipse cx="1040.0" cy="288.0" rx="6.2" ry="1.8" fill="#9da6c4" opacity="0.77"/><circle cx="1037.5" cy="286.5" r="1.9" fill="#cfcfdc" opacity="0.9"/><circle cx="1038.6" cy="283.9" r="3.6" fill="#cfcfdc" opacity="0.9"/><circle cx="1045.9" cy="286.7" r="2.5" fill="#cfcfdc" opacity="0.9"/>
<ellipse cx="1114.0" cy="143.8" rx="8.6" ry="7.2" fill="#9da6c4" opacity="0.77"/><circle cx="1107.4" cy="134.6" r="9.3" fill="#cbbcc6" opacity="0.9"/><circle cx="1113.8" cy="134.5" r="11.8" fill="#cbbcc6" opacity="0.9"/><circle cx="1119.0" cy="133.2" r="9.8" fill="#cbbcc6" opacity="0.9"/>
<ellipse cx="956.5" cy="163.8" rx="2.4" ry="3.3" fill="#9da6c4" opacity="0.47"/><circle cx="954.9" cy="160.9" r="4.8" fill="#c4b6cc" opacity="0.55"/><circle cx="955.7" cy="159.7" r="6.1" fill="#c4b6cc" opacity="0.55"/><circle cx="958.8" cy="158.4" r="3.7" fill="#c4b6cc" opacity="0.55"/>
<ellipse cx="904.0" cy="257.8" rx="4.3" ry="1.5" fill="#9da6c4" opacity="0.77"/><circle cx="899.7" cy="255.4" r="2.1" fill="#cfcfdc" opacity="0.9"/><circle cx="902.8" cy="255.7" r="2.5" fill="#cfcfdc" opacity="0.9"/><circle cx="906.9" cy="255.2" r="1.9" fill="#cfcfdc" opacity="0.9"/>
<ellipse cx="760.0" cy="306.0" rx="13.4" ry="1.8" fill="#9da6c4" opacity="0.77"/><circle cx="750.2" cy="303.7" r="2.4" fill="#cfcfdc" opacity="0.9"/><circle cx="756.5" cy="305.0" r="2.8" fill="#cfcfdc" opacity="0.9"/><circle cx="762.7" cy="302.9" r="2.6" fill="#cfcfdc" opacity="0.9"/><circle cx="769.5" cy="303.1" r="2.0" fill="#cfcfdc" opacity="0.9"/>
<ellipse cx="1018.0" cy="255.3" rx="6.7" ry="2.4" fill="#9da6c4" opacity="0.77"/><circle cx="1015.0" cy="253.0" r="3.3" fill="#cfcfdc" opacity="0.9"/><circle cx="1019.6" cy="252.5" r="3.7" fill="#cfcfdc" opacity="0.9"/><circle cx="1024.3" cy="252.4" r="3.5" fill="#cfcfdc" opacity="0.9"/>
</g>
<ellipse cx="841" cy="561.5" rx="700" ry="117.5" fill="url(#gnd)" filter="url(#b08)"/>
<rect x="563" y="560" width="556" height="85" fill="#b1a18a"/>
<g filter="url(#b08)"><ellipse cx="938" cy="481.5" rx="141" ry="19.5" fill="#020202" transform="rotate(-2.6 938 481.5)"/></g>
<g filter="url(#b08)"><ellipse cx="841.1" cy="373.7" rx="116.4" ry="114.2" fill="url(#sph)"/></g>
<g clip-path="url(#sc)">
<ellipse cx="745" cy="352" rx="26" ry="30" fill="#c9d8f0" opacity=".75" filter="url(#b9)"/>
<ellipse cx="940" cy="352" rx="24" ry="28" fill="#c3d2ec" opacity=".6" filter="url(#b9)"/>
<ellipse cx="795" cy="338" rx="55" ry="30" fill="#bccfee" opacity=".5" filter="url(#b9)"/>
<g filter="url(#b2)"><rect x="715" y="364" width="252" height="8" fill="#d3d5da" opacity=".75"/></g>
<g filter="url(#b1)"><path d="M731 489 L731 407 Q733 395.5 752 395 L928 393.5 Q949 393.5 951 405 L951 489 Z" fill="url(#sgnd)"/></g>
<ellipse cx="727" cy="382" rx="13" ry="20" fill="#d2cdc9" opacity=".75" filter="url(#b5)"/>
<ellipse cx="956" cy="382" rx="11" ry="18" fill="#cfcac6" opacity=".6" filter="url(#b5)"/>
<path d="M726.0 389.6 A116.2 114 0 0 0 766.4 461" fill="none" stroke="#cbc4ba" stroke-width="3.2" opacity=".55" filter="url(#b1)"/>
<ellipse cx="797" cy="331" rx="34" ry="19" fill="url(#glint)" transform="rotate(-33 797 331)"/>
<ellipse cx="793" cy="336" rx="15" ry="11" fill="#fff" filter="url(#b2)"/>
<g filter="url(#cl)">
<ellipse cx="836" cy="325.5" rx="11.0" ry="6.0" fill="#e2d6d6"/>
<ellipse cx="878" cy="342" rx="9.5" ry="4.5" fill="#cdb9b4"/>
<ellipse cx="893" cy="329" rx="6.5" ry="4.5" fill="#d2c2c0"/>
<ellipse cx="906" cy="340" rx="4.0" ry="3.0" fill="#c9b8b6"/>
<ellipse cx="923" cy="308" rx="4.5" ry="10.0" fill="#c6bcc4"/>
<ellipse cx="774" cy="357" rx="15.0" ry="3.5" fill="#a9a09f"/>
<ellipse cx="915" cy="363" rx="10.0" ry="2.0" fill="#b8b0b0"/>
<ellipse cx="812" cy="316" rx="10.0" ry="4.5" fill="#eef0f6"/>
<ellipse cx="760" cy="340" rx="5.0" ry="7.0" fill="#dfe6f4"/>
<ellipse cx="846" cy="360" rx="7.0" ry="2.5" fill="#b5aeb0"/>
</g>
</g>
<g filter="url(#b08)"><path d="M943.8 419.4 L941.3 430.6 Q939.6 436 936.9 441.2 Q933.5 447 929 452.5 L916.8 465.7 L930 482 L832 489 L832.5 486.9 Q846 485.8 858.8 483.2 Q870 480.5 880 473.4 L893.1 465.7 L906.3 457.8 Q913 453.5 919.4 448.2 Q924.5 443.5 929 438.5 Q933 433.8 936 428.9 Q940 423 943.8 419.4 Z" fill="#030303"/></g>
</g></svg>
<div class="abs" style="left:541px;top:645px;width:599px;height:8px;background:#555"></div>
<div class="t" style="left:548.60px;top:659px;font-size:18px;line-height:28px;color:#efefef;letter-spacing:-0.238px;">SunLight</div>
<div class="abs" style="left:1087.4px;top:664.3px;width:40px;height:16.4px;border-radius:8.2px;background:#3fabf7"></div>
<div class="abs" style="left:1109.8000000000002px;top:660.9px;width:23.2px;height:23.2px;border-radius:50%;background:#e9e9e9;box-shadow:0 1px 3px rgba(0,0,0,.5)"></div>
<div class="hdr" style="top:692px"></div>
<svg style="left:553px;top:708.6px" width="13" height="8" viewBox="0 0 13 8"><path d="M0 0 L12.6 0 L6.3 7.4 Z" fill="#efefef"/></svg>
<div class="t" style="left:574.30px;top:698px;font-size:18px;line-height:28px;color:#efefef;letter-spacing:-0.637px;">Parameters</div>
<div class="sep" style="top:737.9px"></div>
<div class="sep" style="top:785.2px"></div>
<div class="sep" style="top:832.5px"></div>
<div class="sep" style="top:879.8px"></div>
<div class="sep" style="top:927.1px"></div>
<svg style="left:556px;top:753.2px" width="8" height="13" viewBox="0 0 8 13"><path d="M0 0 L7.2 6.2 L0 12.4 Z" fill="#efefef"/></svg>
<div class="t" style="left:573.80px;top:746px;font-size:18px;line-height:28px;color:#efefef;letter-spacing:0.055px;">Custom Orientation</div>
<svg style="left:556px;top:800.2px" width="8" height="13" viewBox="0 0 8 13"><path d="M0 0 L7.2 6.2 L0 12.4 Z" fill="#efefef"/></svg>
<div class="t" style="left:573.80px;top:793px;font-size:18px;line-height:28px;color:#efefef;letter-spacing:-0.049px;">Color and Intensity</div>
<svg style="left:556px;top:847.2px" width="8" height="13" viewBox="0 0 8 13"><path d="M0 0 L7.2 6.2 L0 12.4 Z" fill="#efefef"/></svg>
<div class="t" style="left:573.80px;top:840px;font-size:18px;line-height:28px;color:#efefef;letter-spacing:-1.753px;">Sky</div>
<svg style="left:556px;top:894.5px" width="8" height="13" viewBox="0 0 8 13"><path d="M0 0 L7.2 6.2 L0 12.4 Z" fill="#efefef"/></svg>
<div class="t" style="left:573.80px;top:887px;font-size:18px;line-height:28px;color:#efefef;letter-spacing:0.022px;">Albedo Color</div>
<div class="abs" style="left:1080.9px;top:750.6999999999999px;width:38px;height:17px;border-radius:8.5px;background:#1d1d1d;border-bottom:1.5px solid #484848"></div>
<div class="abs" style="left:1075.6000000000001px;top:747.6px;width:22.6px;height:22.6px;border-radius:50%;background:#e9e9e9;box-shadow:0 1px 3px rgba(0,0,0,.5)"></div>
<svg style="left:553px;top:945px" width="13" height="8" viewBox="0 0 13 8"><path d="M0 0 L12.6 0 L6.3 7.4 Z" fill="#efefef"/></svg>
<div class="t" style="left:573.80px;top:935px;font-size:18px;line-height:28px;color:#efefef;letter-spacing:-0.426px;">Clouds</div>
<div class="abs" style="left:1079.6px;top:939.8px;width:40px;height:16.4px;border-radius:8.2px;background:#3fabf7"></div>
<div class="abs" style="left:1102.0px;top:936.4px;width:23.2px;height:23.2px;border-radius:50%;background:#e9e9e9;box-shadow:0 1px 3px rgba(0,0,0,.5)"></div>
<div class="t" style="left:563.30px;top:974px;font-size:18px;line-height:28px;color:#a3a3a3;letter-spacing:-0.387px;">Density</div>
<div class="t" style="left:753.20px;top:974px;font-size:18px;line-height:28px;color:#4a9fe2;letter-spacing:-1.460px;">0.5</div>
<div class="track" style="top:985.8px"></div>
<div class="fill" style="top:985.7px;width:139.6px"></div>
<div class="knob" style="left:980.0px;top:982.8px"></div>
<div class="t" style="left:563.30px;top:1014px;font-size:18px;line-height:28px;color:#a3a3a3;letter-spacing:-0.331px;">Variety</div>
<div class="t" style="left:753.20px;top:1014px;font-size:18px;line-height:28px;color:#4a9fe2;letter-spacing:-1.460px;">0.6</div>
<div class="track" style="top:1025.4px"></div>
<div class="fill" style="top:1025.3px;width:166.4px"></div>
<div class="knob" style="left:1006.8px;top:1022.4px"></div>
<div class="t" style="left:563.30px;top:1053px;font-size:18px;line-height:28px;color:#a3a3a3;letter-spacing:0.021px;">Cirrus Amount</div>
<div class="t" style="left:753.20px;top:1053px;font-size:18px;line-height:28px;color:#4a9fe2;letter-spacing:-1.460px;">0.6</div>
<div class="track" style="top:1065.0px"></div>
<div class="fill" style="top:1064.9px;width:166.4px"></div>
<div class="knob" style="left:1006.8px;top:1062.0px"></div>
<div class="t" style="left:563.30px;top:1093px;font-size:18px;line-height:28px;color:#a3a3a3;letter-spacing:-0.046px;">Height (m)</div>
<div class="t" style="left:754.30px;top:1093px;font-size:18px;line-height:28px;color:#4a9fe2;letter-spacing:-1.113px;">1000</div>
<div class="track" style="top:1104.6px"></div>
<div class="fill" style="top:1104.5px;width:33.6px"></div>
<div class="knob" style="left:874.0px;top:1101.6px"></div>
<div class="t" style="left:563.30px;top:1133px;font-size:18px;line-height:28px;color:#a3a3a3;letter-spacing:-0.593px;">Thickness (m)</div>
<div class="t" style="left:753.20px;top:1133px;font-size:18px;line-height:28px;color:#4a9fe2;letter-spacing:-0.965px;">500</div>
<div class="track" style="top:1144.2px"></div>
<div class="fill" style="top:1144.1px;width:47.0px"></div>
<div class="knob" style="left:887.4px;top:1141.2px"></div>
<div class="t" style="left:563.30px;top:1172px;font-size:18px;line-height:28px;color:#a3a3a3;letter-spacing:-0.307px;">Offset X (m)</div>
<div class="t" style="left:753.20px;top:1172px;font-size:18px;line-height:28px;color:#4a9fe2;letter-spacing:-0.275px;">-250</div>
<div class="track" style="top:1183.8px"></div>
<div class="fill" style="top:1183.7px;width:105.0px"></div>
<div class="knob" style="left:945.4px;top:1180.8px"></div>
<div class="t" style="left:563.30px;top:1212px;font-size:18px;line-height:28px;color:#a3a3a3;letter-spacing:-0.303px;">Offset Y (m)</div>
<div class="t" style="left:753.20px;top:1212px;font-size:18px;line-height:28px;color:#4a9fe2;letter-spacing:-0.965px;">500</div>
<div class="track" style="top:1223.4px"></div>
<div class="fill" style="top:1223.3px;width:207.0px"></div>
<div class="knob" style="left:1047.4px;top:1220.4px"></div>
<div class="t" style="left:563.30px;top:1251px;font-size:18px;line-height:28px;color:#a3a3a3;letter-spacing:-0.984px;">Phase X (%)</div>
<div class="t" style="left:752.90px;top:1251px;font-size:18px;line-height:28px;color:#4a9fe2;">0</div>
<div class="track" style="top:1263.0px"></div>
<div class="fill" style="top:1262.9px;width:139.6px"></div>
<div class="knob" style="left:980.0px;top:1260.0px"></div>
<div class="t" style="left:563.30px;top:1291px;font-size:18px;line-height:28px;color:#a3a3a3;letter-spacing:-0.969px;">Phase Y (%)</div>
<div class="t" style="left:752.90px;top:1291px;font-size:18px;line-height:28px;color:#4a9fe2;">0</div>
<div class="track" style="top:1302.6px"></div>
<div class="fill" style="top:1302.5px;width:139.6px"></div>
<div class="knob" style="left:980.0px;top:1299.6px"></div>
<div class="t" style="left:563.30px;top:1331px;font-size:18px;line-height:28px;color:#a3a3a3;letter-spacing:-0.338px;">Ground Shadows</div>
<div class="t" style="left:563.30px;top:1389px;font-size:18px;line-height:28px;color:#a3a3a3;letter-spacing:-0.280px;">Dynamic Clouds</div>
<div class="t" style="left:563.30px;top:1429px;font-size:18px;line-height:28px;color:#a3a3a3;letter-spacing:0.008px;">Wind Direction (deg)</div>
<div class="t" style="left:752.90px;top:1429px;font-size:18px;line-height:28px;color:#4a9fe2;">0</div>
<div class="track" style="top:1440.6px"></div>
<div class="fill" style="top:1440.5px;width:2.0px"></div>
<div class="knob" style="left:842.4px;top:1437.6px"></div>
<div class="t" style="left:563.30px;top:1469px;font-size:18px;line-height:28px;color:#a3a3a3;letter-spacing:-0.196px;">Wind Speed (m/s)</div>
<div class="t" style="left:752.90px;top:1469px;font-size:18px;line-height:28px;color:#4a9fe2;">3</div>
<div class="track" style="top:1480.2px"></div>
<div class="fill" style="top:1480.1px;width:43.0px"></div>
<div class="knob" style="left:883.4px;top:1477.2px"></div>
<div class="t" style="left:563.30px;top:1508px;font-size:18px;line-height:28px;color:#a3a3a3;letter-spacing:-0.419px;">Phase Velocity (%/s)</div>
<div class="t" style="left:753.20px;top:1508px;font-size:18px;line-height:28px;color:#4a9fe2;letter-spacing:-1.410px;">0.01</div>
<div class="track" style="top:1519.8px"></div>
<div class="fill" style="top:1519.7px;width:30.0px"></div>
<div class="knob" style="left:870.4px;top:1516.8px"></div>
<div class="abs" style="left:751px;top:1334.5px;width:18.5px;height:18.5px;background:#747474"></div>
<div class="abs" style="left:751px;top:1393.3px;width:18.5px;height:18.5px;background:#747474"></div>
<svg style="left:751px;top:1393.3px" width="19" height="19" viewBox="0 0 19 19" fill="none"><path d="M3.6 10 L7.4 14 L15.6 4.4" stroke="#fff" stroke-width="3"/></svg>
<div class="abs" style="left:563px;top:1372.8px;width:571px;height:1px;background:#444"></div>
<div class="hdr" style="top:1541px"></div>
<svg style="left:556px;top:1554.2px" width="8" height="13" viewBox="0 0 8 13"><path d="M0 0 L7.2 6.2 L0 12.4 Z" fill="#efefef"/></svg>
<div class="t" style="left:573.80px;top:1547px;font-size:18px;line-height:28px;color:#efefef;letter-spacing:0.028px;">Options</div>
<svg style="left:0;top:1676px" width="1142" height="37" viewBox="0 1676 1142 37" fill="none" stroke="#eaeaea" stroke-width="2" stroke-linejoin="round">
<path d="M53.3 1695.2 L53.3 1685.2 A10 10 0 0 0 43.3 1695.2 Z M53.3 1695.2 L63.3 1695.2 A10 10 0 0 1 53.3 1705.2 Z" fill="#8f8f8f" stroke="none"/>
<path d="M55.2 1684.5 A10.8 10.8 0 1 0 64 1693.4" />
<path d="M60.6 1682.4 L60.6 1692.8 M55.4 1687.6 L65.8 1687.6" stroke-width="2"/>
<path d="M120.4 1703 L120.4 1687.4 L127.2 1687.4 L129.4 1690 L138.6 1690 L138.6 1693.4 M120.4 1703 L124.6 1693.4 L141.6 1693.4 L137.4 1703 Z"/>
<path d="M195.8 1687 L210 1687 L214.2 1691.2 L214.2 1704 L195.8 1704 Z"/><path d="M200.4 1687 L200.4 1692.4 L208.6 1692.4 L208.6 1687" stroke-width="1.8"/><rect x="199.6" y="1697.2" width="10.8" height="6.8" stroke="#bdbdbd" stroke-width="1.8"/>
<g stroke="#7a7a7a"><path d="M271.4 1688.4 L289.6 1688.4" stroke-width="2.2"/><path d="M276.6 1687.6 L276.6 1685.2 L284.4 1685.2 L284.4 1687.6" stroke-width="1.6"/><path d="M273.6 1689.4 L273.6 1702 Q273.6 1704.2 275.8 1704.2 L285.2 1704.2 Q287.4 1704.2 287.4 1702 L287.4 1689.4"/><path d="M277.6 1692.6 L277.6 1700.6 M280.5 1692.6 L280.5 1700.6 M283.4 1692.6 L283.4 1700.6" stroke-width="1.5"/></g>
<g stroke="none" fill="#ececec"><rect x="487" y="1683.2" width="4.4" height="8" rx="1.6"/><path d="M482.2 1696.5 Q482.6 1692 489.2 1692 Q495.8 1692 496.2 1696.5 L500.4 1706 L477.8 1706 Z"/></g>
<g stroke="none" fill="#3c3c3c"><path d="M483.6 1697.2 Q489.2 1692.6 494.8 1697.2 Z"/><rect x="482.6" y="1700.2" width="3" height="3.4"/><rect x="486.6" y="1700.2" width="3" height="3.4"/><rect x="490.6" y="1700.2" width="3" height="3.4"/><rect x="494.4" y="1700.2" width="2.2" height="3.4"/></g>
<path d="M1018.8 1695 L1026.8 1686 L1026.8 1691.8 L1036.4 1691.8 L1036.4 1698.6 L1026.8 1698.6 L1026.8 1704 Z" fill="#e9e9e9" stroke="none"/>
<path d="M1103.6 1686 L1111.8 1694.4 L1107.2 1694.4 L1107.2 1704 L1100 1704 L1100 1694.4 L1095.6 1694.4 Z" fill="#9e9e9e" stroke="none"/>
</svg>
<div class="abs" style="left:0;top:45px;width:1142px;height:1px;background:#0d4428"></div>
<div class="abs" style="left:1px;top:45px;width:1px;height:1667px;background:#0d4428"></div>
<div class="abs" style="left:1140px;top:45px;width:1px;height:1667px;background:#14301f"></div>
<div class="abs" style="left:0;top:1711px;width:1142px;height:1px;background:#0d4428"></div>
<div class="abs" style="left:0;top:45px;width:1px;height:1668px;background:#9dfcd2"></div>
<div class="abs" style="left:1141px;top:45px;width:1px;height:1668px;background:#71fcbd"></div>
<div class="abs" style="left:0;top:1712px;width:1142px;height:1px;background:#71fcbd"></div>
</body></html>
